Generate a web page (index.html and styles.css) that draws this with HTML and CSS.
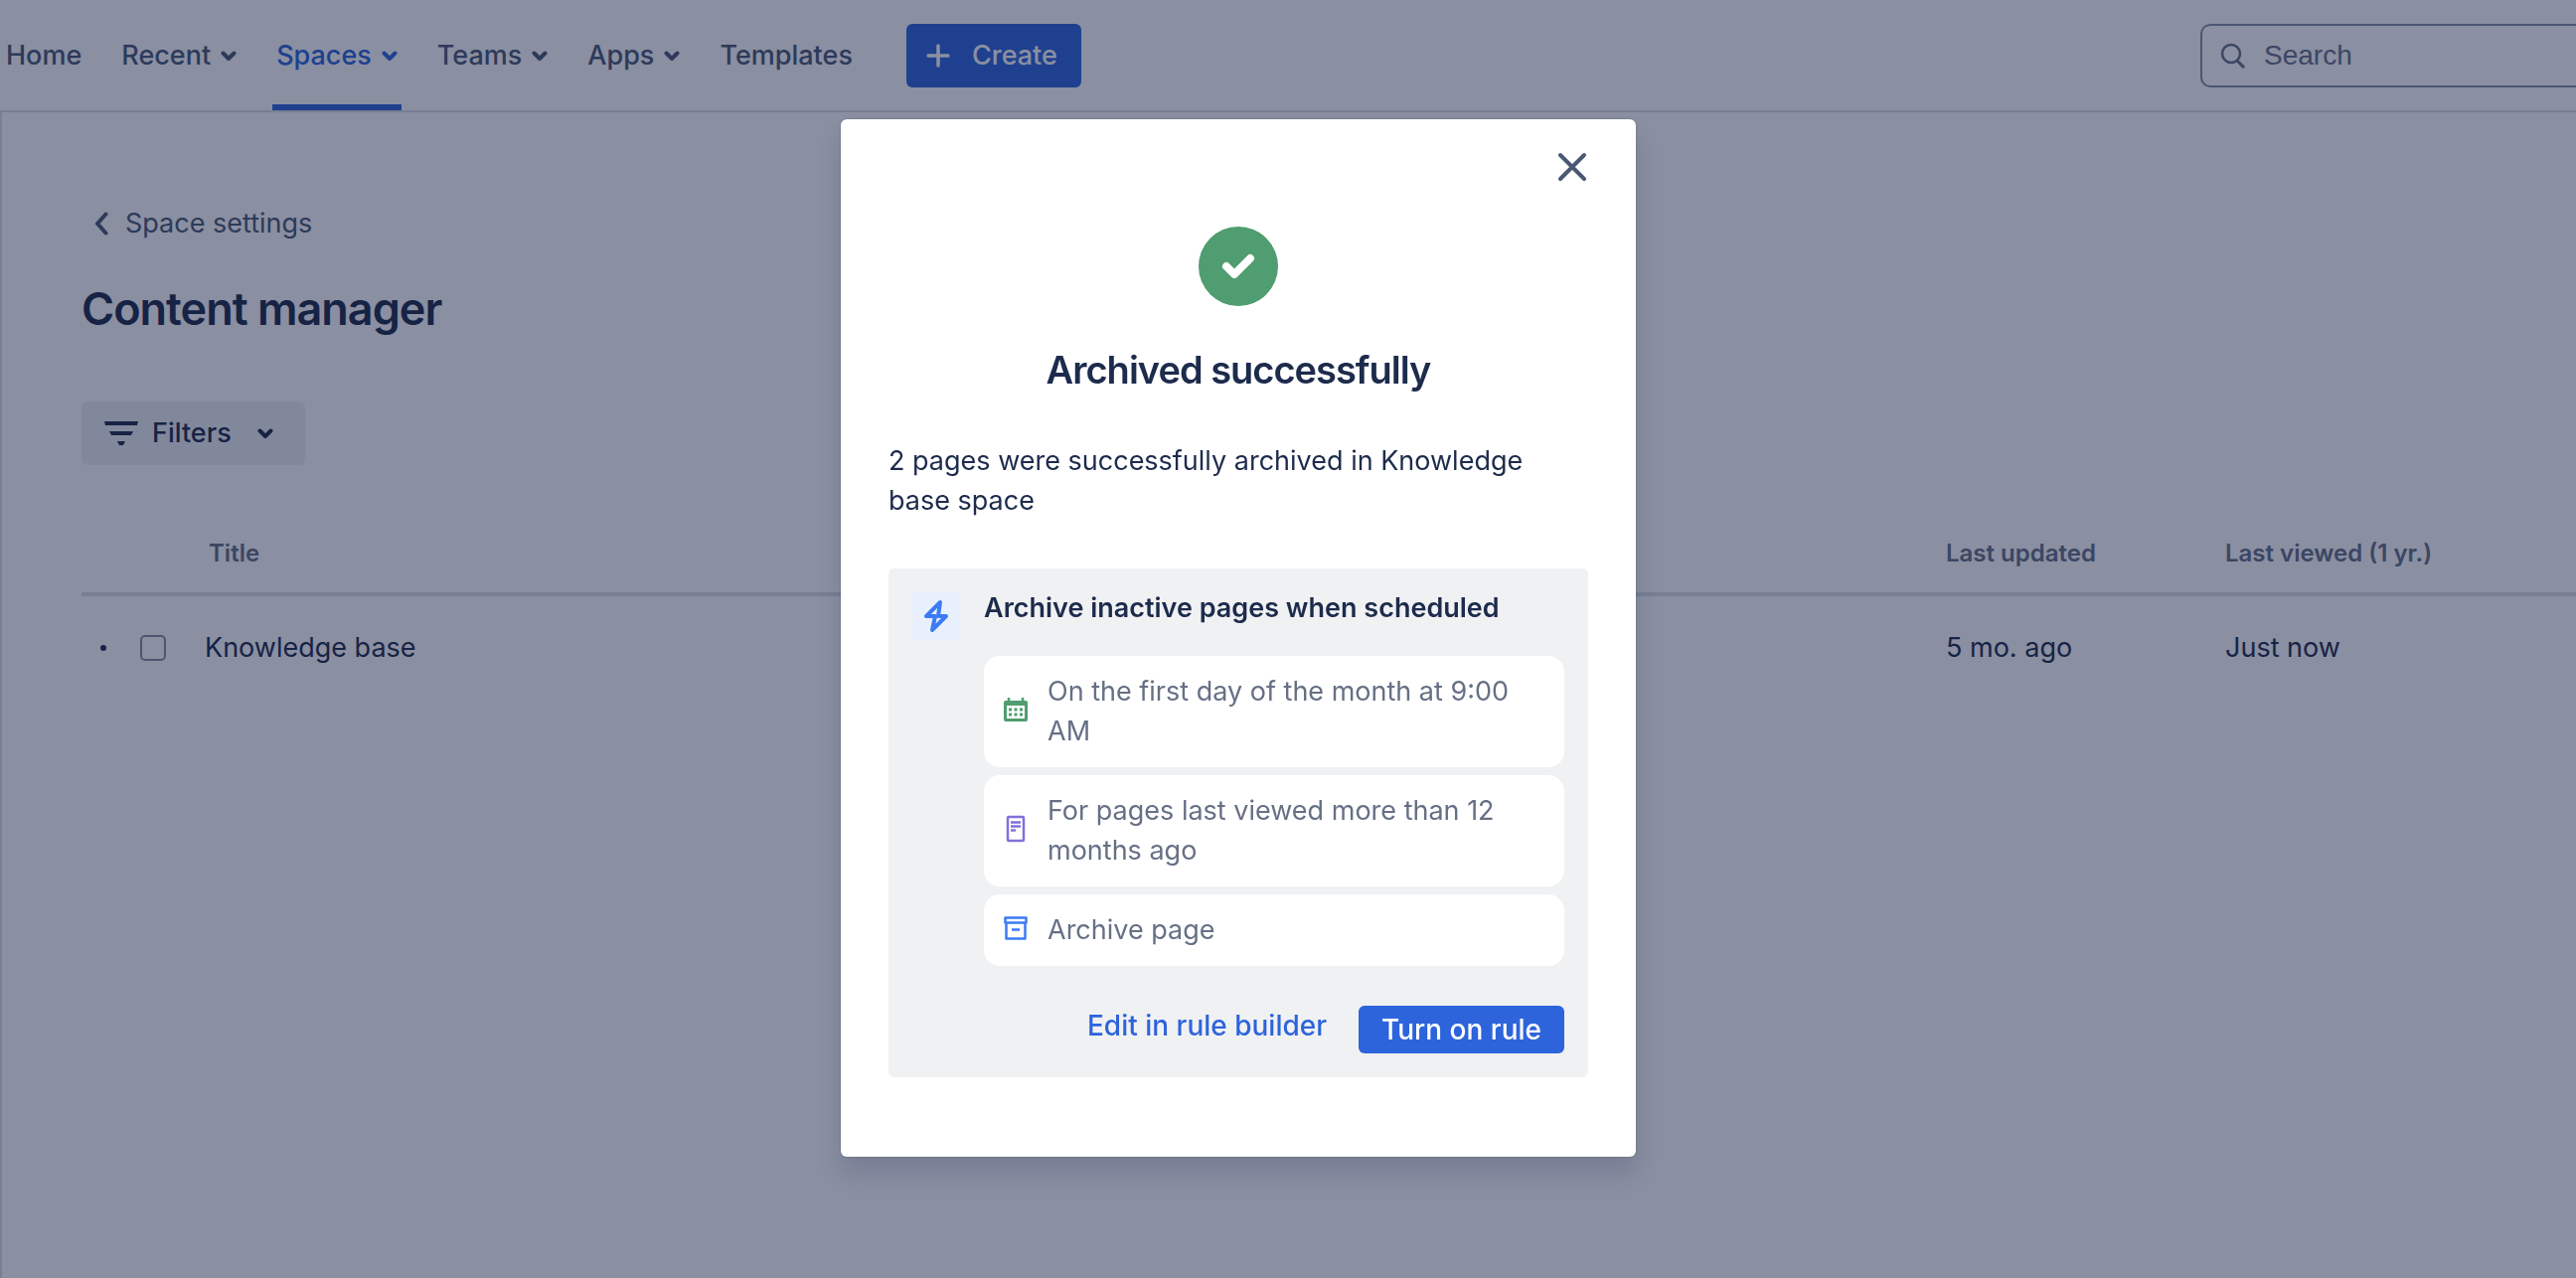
FILE: index.html
```html
<!DOCTYPE html>
<html lang="en">
<head>
<meta charset="utf-8">
<title>Content manager</title>
<link rel="stylesheet" href="styles.css">
</head>
<body>
<svg class="sprite" aria-hidden="true">
  <symbol id="chevron" viewBox="0 0 16 10"><path d="M2.500 2.500 8 8l5.500-5.500" fill="none" stroke="currentColor" stroke-width="4" stroke-linecap="round" stroke-linejoin="round"/></symbol>
</svg>
<header class="topbar">
  <nav class="nav">
    <a class="nav-item" href="#">Home</a>
    <button class="nav-item" type="button">Recent<svg class="chevron"><use href="#chevron"/></svg></button>
    <button class="nav-item active" type="button">Spaces<svg class="chevron"><use href="#chevron"/></svg></button>
    <button class="nav-item" type="button">Teams<svg class="chevron"><use href="#chevron"/></svg></button>
    <button class="nav-item" type="button">Apps<svg class="chevron"><use href="#chevron"/></svg></button>
    <a class="nav-item" href="#">Templates</a>
  </nav>
  <button class="create" type="button"><svg class="plus" viewBox="0 0 24 24"><path d="M12 2v20M2 12h20" fill="none" stroke="currentColor" stroke-width="3.500" stroke-linecap="round"/></svg>Create</button>
  <label class="search">
    <svg class="search-icon" viewBox="0 0 26 26"><path d="M17 18l7 7" fill="none" stroke="currentColor" stroke-width="3"/><circle cx="11" cy="11" r="9" fill="none" stroke="currentColor" stroke-width="2.500"/></svg>
    <input type="search" placeholder="Search" aria-label="Search">
  </label>
</header>
<main class="content">
  <a class="back" href="#"><svg class="back-icon" viewBox="0 0 14 24"><path d="M11.500 2.500 3 12l8.500 9.500" fill="none" stroke="currentColor" stroke-width="4" stroke-linecap="round" stroke-linejoin="round"/></svg>Space settings</a>
  <h1>Content manager</h1>
  <button class="filters" type="button"><svg class="filter-icon" viewBox="0 0 34 24"><path d="M0 0h34l-1 4H1zM5 10h24l-2 4H7zM13 20h8l-2 4h-4z" fill="currentColor"/></svg>Filters<svg class="chevron"><use href="#chevron"/></svg></button>
  <table class="pages">
    <colgroup><col class="col-select"><col><col class="col-updated"><col class="col-viewed"></colgroup>
    <thead><tr><th></th><th>Title</th><th>Last updated</th><th>Last viewed (1 yr.)</th></tr></thead>
    <tbody><tr>
      <td><div class="select"><span class="dot"></span><input type="checkbox" id="row" aria-label="Select Knowledge base"></div></td>
      <td><label for="row">Knowledge base</label></td><td>5 mo. ago</td><td>Just now</td>
    </tr></tbody>
  </table>
</main>
<div class="blanket">
  <section class="modal" role="dialog" aria-modal="true" aria-labelledby="modal-title">
    <button class="close" type="button" aria-label="Close"><svg viewBox="0 0 30 30"><path d="M3 3l24 24M27 3 3 27" fill="none" stroke="currentColor" stroke-width="4" stroke-linecap="round"/></svg></button>
    <svg class="success" viewBox="0 0 80 80"><circle cx="40" cy="40" r="40" fill="#4f9d70"/><path d="M28 40l8 8L52 32" fill="none" stroke="#fff" stroke-width="8" stroke-linecap="round" stroke-linejoin="round"/></svg>
    <h2 id="modal-title">Archived successfully</h2>
    <p class="message">2 pages were successfully archived in Knowledge base space</p>
    <div class="rule">
      <span class="bolt"><svg viewBox="0 0 48 48"><path d="M28 10 14 24h9l-3 14L34 24h-8z" fill="none" stroke="currentColor" stroke-width="4" stroke-linejoin="round"/></svg></span>
      <div class="rule-body">
        <h3>Archive inactive pages when scheduled</h3>
        <ul>
          <li class="green"><svg class="step" viewBox="0 0 24 24"><path d="M5 0v5M19 0v5" stroke="currentColor" stroke-width="2.500"/><path fill-rule="evenodd" d="M2 3h20a2 2 0 0 1 2 2v17a2 2 0 0 1-2 2H2a2 2 0 0 1-2-2V5a2 2 0 0 1 2-2zm1 5v13h18V8z" fill="currentColor"/><path d="M5 12h14M5 17h14" stroke="currentColor" stroke-width="3" stroke-dasharray="3 2.500"/></svg><span>On the first day of the month at 9:00 AM</span></li>
          <li class="purple"><svg class="step" viewBox="0 0 24 28"><rect x="4" y="2" width="16" height="24" rx="1" fill="none" stroke="currentColor" stroke-width="2.500"/><path d="M7 7.500h10M7 11.500h10M7 15.500h5" stroke="currentColor" stroke-width="2.500"/></svg><span>For pages last viewed more than 12 months ago</span></li>
          <li class="blue"><svg class="step" viewBox="0 0 24 24"><path d="M1.500 1.500h21v5h-21zM2.500 6.500h19v16h-19zM8 13.500h8" fill="none" stroke="currentColor" stroke-width="2.500" stroke-linejoin="round"/></svg><span>Archive page</span></li>
        </ul>
        <div class="actions"><a href="#">Edit in rule builder</a><button type="button">Turn on rule</button></div>
      </div>
    </div>
  </section>
</div>
</body>
</html>
```
FILE: styles.css
```css
* { box-sizing: border-box; }
body {
  margin: 0;
  min-height: 100vh;
  display: flex;
  flex-direction: column;
  background: #fff;
  color: #1d2b4c;
  font: 27px/40px Inter, "Liberation Sans", sans-serif;
}
button, input { font: inherit; color: inherit; margin: 0; }
button { border: 0; background: none; padding: 0; cursor: pointer; }
a { color: inherit; text-decoration: none; }
h1, h2, h3, p, ul { margin: 0; padding: 0; }
svg { display: block; flex: none; }
.sprite { position: absolute; width: 0; height: 0; }
.chevron { width: 16px; height: 10px; }

.topbar {
  display: flex;
  align-items: center;
  height: 113px;
  border-bottom: 2px solid #dcdfe4;
  color: #4a5874;
}
.nav { display: flex; align-self: stretch; gap: 32px; padding-left: 2px; }
.nav-item {
  display: flex;
  align-items: center;
  gap: 10px;
  padding: 0 4px;
  font-weight: 500;
  border-bottom: 6px solid transparent;
  border-top: 6px solid transparent;
}
.nav-item.active { color: #2d64dc; border-bottom-color: #2d64dc; }
.create {
  display: flex;
  align-items: center;
  gap: 22px;
  height: 64px;
  margin-left: 50px;
  padding: 0 24px 0 20px;
  border-radius: 6px;
  background: #2d64dc;
  color: #fff;
  font-weight: 500;
}
.plus { width: 24px; height: 24px; }
.search {
  display: flex;
  align-items: center;
  gap: 18px;
  width: 378px;
  height: 64px;
  margin-left: auto;
  padding-left: 18px;
  border: 2px solid #8590a2;
  border-right: 0;
  border-radius: 10px 0 0 10px;
  color: #667085;
}
.search-icon { width: 26px; height: 26px; }
.search input {
  flex: 1;
  min-width: 0;
  padding: 0;
  border: 0;
  background: none;
  font-family: "Liberation Sans", Arial, sans-serif;
  font-size: 28px;
}
.search input::placeholder { color: #667085; opacity: 1; }

.content {
  flex: 1;
  padding: 92px 0 0 80px;
  border-left: 2px solid #dcdfe4;
}
.back {
  display: flex;
  align-items: center;
  gap: 17px;
  padding-left: 13px;
  color: #4a5874;
}
.back-icon { width: 14px; height: 24px; }
h1 {
  margin-top: 38px;
  font-size: 45px;
  line-height: 56px;
  font-weight: 600;
  letter-spacing: -1px;
}
.filters {
  display: flex;
  align-items: center;
  gap: 14px;
  height: 64px;
  margin-top: 65px;
  padding: 0 32px 0 23px;
  border-radius: 6px;
  background: #f0f1f4;
  font-weight: 500;
}
.filter-icon { width: 34px; height: 24px; }
.filters .chevron { margin-left: 12px; }
.pages { width: 100%; margin-top: 60px; border-collapse: collapse; table-layout: fixed; }
.pages th, .pages td { padding: 0; text-align: left; }
.pages th {
  height: 70px;
  padding-bottom: 10px;
  border-bottom: 4px solid #dcdfe4;
  color: #667085;
  font-size: 24px;
  font-weight: 600;
}
.pages td { height: 106px; }
.col-select { width: 124px; }
.col-updated { width: 281px; }
.col-viewed { width: 353px; }
.pages th:nth-child(2) { padding-left: 4px; }
.select { display: flex; align-items: center; gap: 34px; padding-left: 19px; }
.dot { width: 6px; height: 6px; border-radius: 50%; background: currentColor; }
.select input {
  appearance: none;
  width: 26px;
  height: 26px;
  border: 2px solid #8590a2;
  border-radius: 5px;
}

.blanket {
  position: fixed;
  inset: 0;
  display: flex;
  justify-content: center;
  align-items: flex-start;
  padding: 120px 100px 0 0;
  background: rgba(16, 27, 64, .49);
}
.modal {
  display: flex;
  flex-direction: column;
  align-items: center;
  width: 800px;
  padding: 32px 48px 80px;
  border-radius: 6px;
  background: #fff;
  box-shadow: 0 16px 24px rgba(9, 30, 66, .15), 0 0 2px rgba(9, 30, 66, .31);
}
.close { align-self: flex-end; padding: 1px; color: #4a5874; }
.close svg { width: 30px; height: 30px; }
.success { width: 80px; height: 80px; margin-top: 44px; }
h2 {
  margin-top: 40px;
  font-size: 38px;
  line-height: 48px;
  font-weight: 600;
  letter-spacing: -1px;
}
.message { align-self: stretch; margin-top: 48px; }
.rule {
  display: flex;
  align-self: stretch;
  gap: 24px;
  margin-top: 48px;
  padding: 24px;
  border-radius: 6px;
  background: #f0f1f3;
}
.bolt { width: 48px; height: 48px; border-radius: 4px; background: #e9f0fd; color: #3d7af5; }
.rule-body { flex: 1; min-width: 0; }
h3 { font-size: 27px; line-height: 32px; font-weight: 600; }
ul { display: grid; gap: 8px; margin-top: 32px; list-style: none; }
li {
  display: flex;
  align-items: center;
  gap: 20px;
  padding: 16px 20px;
  border-radius: 16px;
  background: #fff;
}
li span { color: #667085; }
.step { width: 24px; margin-bottom: 4px; }
.green { color: #4f9d70; }
.purple { color: #8270db; }
.blue { color: #3d7af5; }
.actions {
  display: flex;
  justify-content: flex-end;
  gap: 32px;
  margin-top: 40px;
  font-size: 28px;
  font-weight: 500;
}
.actions a { color: #2d64dc; }
.actions button {
  height: 48px;
  padding: 0 23px;
  border-radius: 6px;
  background: #2d64dc;
  color: #fff;
}
```
